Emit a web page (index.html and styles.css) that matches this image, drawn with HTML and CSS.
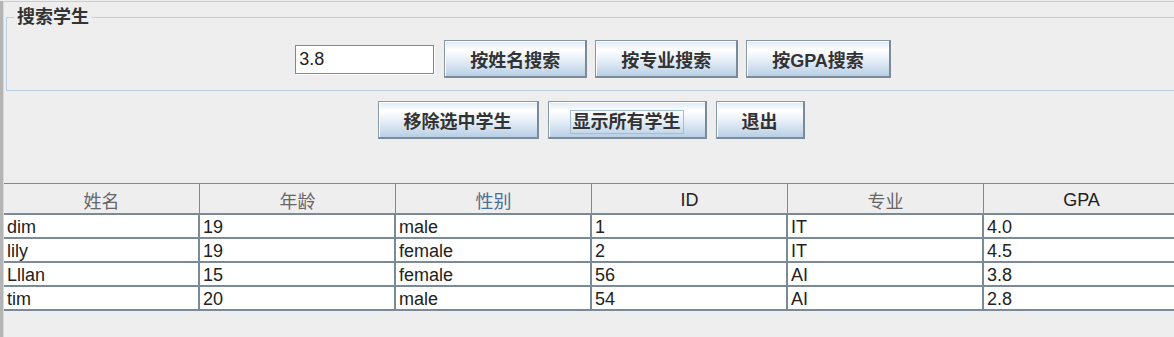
FILE: index.html
```html
<!DOCTYPE html>
<html lang="zh">
<head>
    <meta charset="UTF-8"/>
    <title>学生管理</title>
    <link rel="stylesheet" href="styles.css">
</head>
<body>
<div class="frame">
    <div class="topline"></div>

    <fieldset class="search">
        <legend>搜索学生</legend>
        <div class="search-row">
            <input class="field" type="text" value="3.8"/>
            <button class="btn" type="button">按姓名搜索</button>
            <button class="btn" type="button">按专业搜索</button>
            <button class="btn" type="button">按GPA搜索</button>
        </div>
    </fieldset>

    <div class="actions">
        <button class="btn" type="button">移除选中学生</button>
        <button class="btn btn-focus" type="button"><span class="focus">显示所有学生</span></button>
        <button class="btn" type="button">退出</button>
    </div>

    <table class="students">
        <thead>
        <tr>
            <th class="cjk">姓名</th>
            <th class="cjk">年龄</th>
            <th class="cjk blue">性别</th>
            <th>ID</th>
            <th class="cjk">专业</th>
            <th>GPA</th>
        </tr>
        </thead>
        <tbody>
        <tr><td>dim</td><td>19</td><td>male</td><td>1</td><td>IT</td><td>4.0</td></tr>
        <tr><td>lily</td><td>19</td><td>female</td><td>2</td><td>IT</td><td>4.5</td></tr>
        <tr><td>Lllan</td><td>15</td><td>female</td><td>56</td><td>AI</td><td>3.8</td></tr>
        <tr><td>tim</td><td>20</td><td>male</td><td>54</td><td>AI</td><td>2.8</td></tr>
        </tbody>
    </table>
</div>
</body>
</html>
```

FILE: styles.css
```css
html, body {
    margin: 0;
    height: 100%;
    overflow: hidden;
    background-color: #eeeeee;
}

body {
    font-family: 'Liberation Sans', 'Noto Sans CJK SC', sans-serif;
    font-size: 18px;
    color: #222;
}

.frame {
    width: 1182px;
    height: 100%;
    padding-left: 1px;
    border-left: 3px solid #b4b4b4;
    background: linear-gradient(to right, #d9d9d9 0, #d9d9d9 1px, #eeeeee 1px);
}

.topline {
    height: 1px;
    margin-top: 1px;
    background-color: #b8cfe5;
}

.search {
    margin: 6px 6px 0 2px;
    padding: 14px 0 12px;
    border: 1px solid #b8cfe5;
}

.search legend {
    margin-left: 7px;
    padding: 0 3px;
    font-size: 18px;
    line-height: 18px;
    font-weight: bold;
    color: #333;
}

.search-row, .actions {
    display: flex;
    justify-content: center;
    align-items: center;
    gap: 8px;
}

.actions {
    gap: 9px;
    margin: 10px 0 44px;
    padding-right: 8px;
}

.field {
    width: 139px;
    height: 29px;
    margin-right: 2px;
    padding: 0 3px;
    box-sizing: border-box;
    border: 1px solid #7a8a99;
    box-shadow: 1px 1px 0 #fff;
    font-family: 'Liberation Sans', sans-serif;
    font-size: 18px;
    color: #222;
    outline: none;
}

.btn {
    height: 38px;
    padding: 0 25px;
    box-sizing: border-box;
    border-style: solid;
    border-width: 1px 2px 2px 1px;
    border-color: #8797a6 #7a8a99 #7a8a99 #8797a6;
    background: linear-gradient(#dde8f3 0%, #ffffff 25%, #e6eef7 55%, #b8cfe5 100%);
    box-shadow: inset 1px 1px 0 #fff;
    font-family: 'Liberation Sans', 'Noto Sans CJK SC', sans-serif;
    font-size: 18px;
    font-weight: bold;
    color: #333;
    white-space: nowrap;
}

.btn-focus {
    padding: 0 21px;
}

.focus {
    padding: 1px 2px;
    border: 1px solid #a3bdd6;
}

.students {
    width: 1176px;
    table-layout: fixed;
    border-spacing: 0;
    background-color: #fff;
}

.students th {
    height: 29px;
    padding: 3px 0 0;
    box-sizing: border-box;
    border-top: 1px solid #7a8a99;
    border-bottom: 2px solid #7a8a99;
    border-right: 1px solid #7a8a99;
    background-color: #eeeeee;
    font-size: 18px;
    font-weight: normal;
    color: #222;
    text-align: center;
}

.students th.cjk {
    color: #666;
}

.students th.blue {
    color: #4d6f93;
}

.students td {
    height: 24px;
    padding: 2px 3px 0;
    box-sizing: border-box;
    border-bottom: 2px solid #7a8a99;
    border-right: 2px solid #7a8a99;
    font-size: 18px;
    line-height: 20px;
    color: #222;
    white-space: nowrap;
}
```
